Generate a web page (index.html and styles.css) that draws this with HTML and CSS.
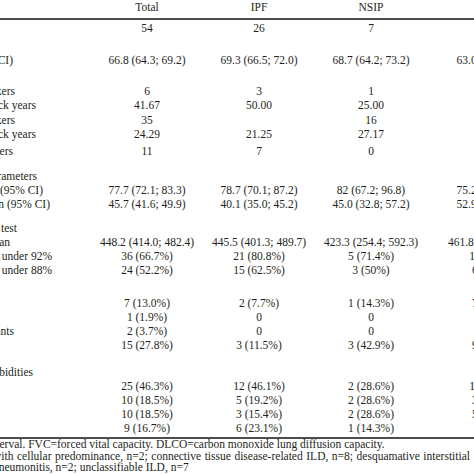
FILE: index.html
```html
<!DOCTYPE html>
<html lang="en">
<head>
<meta charset="utf-8">
<title>Baseline characteristics</title>
<link rel="stylesheet" href="styles.css">
</head>
<body>
<div class="sheet">
  <table class="data">
    <colgroup>
      <col class="c-label"><col class="c-val"><col class="c-val"><col class="c-val"><col class="c-wide">
    </colgroup>
    <thead>
      <tr class="head">
        <th class="lab l-hide">Characteristic</th><th>Total</th><th>IPF</th><th>NSIP</th><th class="far">Others</th>
      </tr>
    </thead>
    <tbody>
      <tr class="gap-1"><td class="lab l-hide">Patients, n</td><td>54</td><td>26</td><td>7</td><td>21</td></tr>
      <tr class="gap-18"><td class="lab l-age">Age, years, mean (95% CI)</td><td>66.8 (64.3; 69.2)</td><td>69.3 (66.5; 72.0)</td><td>68.7 (64.2; 73.2)</td><td>63.0 (58.1; 67.9)</td></tr>
      <tr class="gap-3"><td class="lab l-hide">Smoking history</td><td></td><td></td><td></td><td></td></tr>
      <tr><td class="lab l-smk">Current smokers</td><td>6</td><td>3</td><td>1</td><td>2</td></tr>
      <tr><td class="lab l-pack">Pack years</td><td>41.67</td><td>50.00</td><td>25.00</td><td>37.50</td></tr>
      <tr class="gap-1"><td class="lab l-smk">Former smokers</td><td>35</td><td></td><td>16</td><td>10</td></tr>
      <tr><td class="lab l-pack">Pack years</td><td>24.29</td><td>21.25</td><td>27.17</td><td>25.10</td></tr>
      <tr class="gap-3"><td class="lab l-never">Never smokers</td><td>11</td><td>7</td><td>0</td><td>4</td></tr>
      <tr class="gap-11"><td class="lab l-lung">Lung function parameters</td><td></td><td></td><td></td><td></td></tr>
      <tr><td class="lab l-fvc">FVC, % pred (95% CI)</td><td>77.7 (72.1; 83.3)</td><td>78.7 (70.1; 87.2)</td><td>82 (67.2; 96.8)</td><td>75.2 (66.0; 84.4)</td></tr>
      <tr><td class="lab l-dlco">DLCO, % pred, mean (95% CI)</td><td>45.7 (41.6; 49.9)</td><td>40.1 (35.0; 45.2)</td><td>45.0 (32.8; 57.2)</td><td>52.9 (45.3; 60.5)</td></tr>
      <tr class="gap-10"><td class="lab l-walk">6-minute walk test</td><td></td><td></td><td></td><td></td></tr>
      <tr><td class="lab l-dist">Distance (m), mean</td><td>448.2 (414.0; 482.4)</td><td>445.5 (401.3; 489.7)</td><td>423.3 (254.4; 592.3)</td><td>461.8 (404.6; 519.0)</td></tr>
      <tr><td class="lab l-sat">Saturation under 92%</td><td>36 (66.7%)</td><td>21 (80.8%)</td><td>5 (71.4%)</td><td>10 (47.6%)</td></tr>
      <tr><td class="lab l-sat">Saturation under 88%</td><td>24 (52.2%)</td><td>15 (62.5%)</td><td>3 (50%)</td><td>6 (30.0%)</td></tr>
      <tr class="gap-5"><td class="lab l-hide">Treatment</td><td></td><td></td><td></td><td></td></tr>
      <tr><td class="lab l-hide">Corticosteroids</td><td>7 (13.0%)</td><td>2 (7.7%)</td><td>1 (14.3%)</td><td>7 (33.3%)</td></tr>
      <tr><td class="lab l-hide">Azathioprine</td><td>1 (1.9%)</td><td>0</td><td>0</td><td>1 (4.8%)</td></tr>
      <tr><td class="lab l-imm">Other immunosuppressants</td><td>2 (3.7%)</td><td>0</td><td>0</td><td>2 (9.5%)</td></tr>
      <tr><td class="lab l-hide">Antifibrotics</td><td>15 (27.8%)</td><td>3 (11.5%)</td><td>3 (42.9%)</td><td>9 (42.9%)</td></tr>
      <tr class="gap-13"><td class="lab l-comorb">Comorbidities</td><td></td><td></td><td></td><td></td></tr>
      <tr><td class="lab l-hide">Heart disease</td><td>25 (46.3%)</td><td>12 (46.1%)</td><td>2 (28.6%)</td><td>11 (52.4%)</td></tr>
      <tr><td class="lab l-hide">Diabetes</td><td>10 (18.5%)</td><td>5 (19.2%)</td><td>2 (28.6%)</td><td>3 (14.3%)</td></tr>
      <tr><td class="lab l-hide">GERD</td><td>10 (18.5%)</td><td>3 (15.4%)</td><td>2 (28.6%)</td><td>5 (23.8%)</td></tr>
      <tr class="last"><td class="lab l-hide">Cancer</td><td>9 (16.7%)</td><td>6 (23.1%)</td><td>1 (14.3%)</td><td>2 (9.5%)</td></tr>
    </tbody>
  </table>
  <div class="notes">
    <p class="note note-1">CI=confidence interval. FVC=forced vital capacity. DLCO=carbon monoxide lung diffusion capacity.</p>
    <div class="note note-2">
      <span class="note-key">Other ILD: NSIP</span>
      <p class="note-text">with cellular predominance, n=2; connective tissue disease-related ILD, n=8; desquamative interstitial pneumonitis, n=2; unclassifiable ILD, n=7</p>
    </div>
  </div>
</div>
</body>
</html>
```
FILE: styles.css
```css
html, body {
  margin: 0;
  padding: 0;
  background: #ffffff;
  overflow: hidden;
}

body {
  font-family: "Liberation Serif", "Times New Roman", serif;
  font-size: 11.5px;
  color: #231f20;
}

.sheet {
  margin-left: -140px;
  width: 703px;
}

.data {
  table-layout: fixed;
  border-collapse: collapse;
  border-spacing: 0;
  width: 703px;
}

.c-label { width: 231px; }
.c-val { width: 112px; }
.c-wide { width: 136px; }

.data th,
.data td {
  padding: 0;
  line-height: 14px;
  text-align: center;
  white-space: nowrap;
  font-weight: normal;
}

.data .lab {
  text-align: right;
}

.data .far {
  text-align: left;
  padding-left: 60px;
}

.head th {
  padding-bottom: 4px;
  border-bottom: 2px solid #4d4d4d;
}

.last td {
  padding-bottom: 2px;
  border-bottom: 2px solid #4d4d4d;
}

.gap-1 td { padding-top: 1px; }
.gap-3 td { padding-top: 3px; }
.gap-5 td { padding-top: 5px; }
.gap-10 td { padding-top: 10px; }
.gap-11 td { padding-top: 11px; }
.gap-13 td { padding-top: 13px; }
.gap-18 td { padding-top: 18px; }

/* label tails: right ends of the first-column labels */
.data .l-hide { padding-right: 100px; }
.data .l-age { padding-right: 78px; }
.data .l-smk { padding-right: 76px; }
.data .l-pack { padding-right: 55px; }
.data .l-never { padding-right: 78px; }
.data .l-lung { padding-right: 54px; }
.data .l-fvc { padding-right: 48px; }
.data .l-dlco { padding-right: 41px; }
.data .l-walk { padding-right: 74px; }
.data .l-dist { padding-right: 81px; }
.data .l-sat { padding-right: 39px; }
.data .l-imm { padding-right: 77px; }
.data .l-comorb { padding-right: 58px; }

.notes {
  margin-top: 0;
  line-height: 11.5px;
}

.note {
  margin: 0;
}

.note-1 {
  padding-left: 56px;
  white-space: nowrap;
}

.note-2 {
  display: flex;
}

.note-key {
  flex: none;
  width: 133px;
  text-align: right;
  white-space: nowrap;
  overflow: hidden;
}

.note-text {
  margin: 0;
  width: 477px;
  text-align: justify;
}
```
